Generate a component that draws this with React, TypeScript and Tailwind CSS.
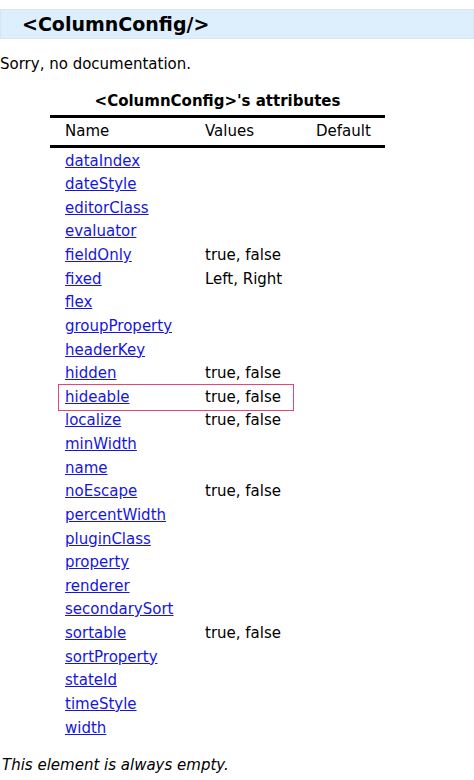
const rows: [string, string][] = [
  ['dataIndex', ''],
  ['dateStyle', ''],
  ['editorClass', ''],
  ['evaluator', ''],
  ['fieldOnly', 'true, false'],
  ['fixed', 'Left, Right'],
  ['flex', ''],
  ['groupProperty', ''],
  ['headerKey', ''],
  ['hidden', 'true, false'],
  ['hideable', 'true, false'],
  ['localize', 'true, false'],
  ['minWidth', ''],
  ['name', ''],
  ['noEscape', 'true, false'],
  ['percentWidth', ''],
  ['pluginClass', ''],
  ['property', ''],
  ['renderer', ''],
  ['secondarySort', ''],
  ['sortable', 'true, false'],
  ['sortProperty', ''],
  ['stateId', ''],
  ['timeStyle', ''],
  ['width', ''],
];

export default function App() {
  return (
    <div className="w-[474px] h-[780px] bg-white text-black overflow-hidden font-['DejaVu_Sans',Verdana,sans-serif] text-[15px]">
      {/* title bar */}
      <div className="mt-[9px] h-[30px] bg-[#ddeefc] border border-[#d6e6f4] flex items-center pl-[21px]">
        <h1 className="text-[19px] font-bold leading-none">&lt;ColumnConfig/&gt;</h1>
      </div>

      <p className="mt-[16px] leading-[18px]">Sorry, no documentation.</p>

      {/* attributes table */}
      <div className="ml-[50px] w-[335px] mt-[19px]">
        <div className="text-center font-bold leading-[18px]">&lt;ColumnConfig&gt;'s attributes</div>
        <div className="mt-[5px] border-t-[3px] border-black" />
        <div className="flex h-[27px] items-center">
          <div className="w-[155px] pl-[15px]">Name</div>
          <div className="w-[111px]">Values</div>
          <div>Default</div>
        </div>
        <div className="border-t-[3px] border-black" />
        <div className="pt-[1px]">
          {rows.map(([name, values]) => (
            <div
              key={name}
              className={`flex h-[23.625px] items-center ${
                name === 'hideable' ? 'relative' : ''
              }`}
            >
              {name === 'hideable' && (
                <div className="absolute left-[8px] w-[236px] top-[-1px] h-[27px] border border-[#e4457a] pointer-events-none" />
              )}
              <div className="w-[155px] pl-[15px]">
                <a href="#" className="text-[#1616dc] underline">{name}</a>
              </div>
              <div className="w-[111px]">{values}</div>
              <div />
            </div>
          ))}
        </div>
      </div>

      <p className="mt-[16px] ml-[2px] italic leading-[18px]">This element is always empty.</p>
    </div>
  );
}
